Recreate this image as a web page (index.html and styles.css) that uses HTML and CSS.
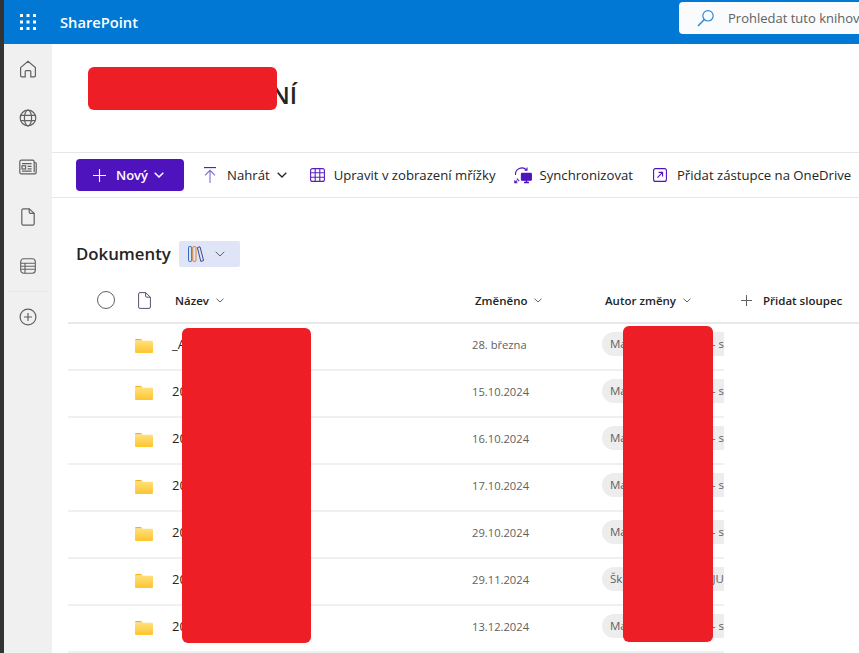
FILE: index.html
```html
<!DOCTYPE html>
<html lang="cs">

<head>
    <meta charset="UTF-8">
    <meta name="viewport" content="width=device-width, initial-scale=1.0">
    <title>SharePoint</title>
    <link rel="stylesheet" href="styles.css">
</head>

<body>
    <div class="app">
        <header class="topbar">
            <svg class="waffle" width="16" height="16" viewBox="0 0 16 16" fill="#fff">
                <rect x="0" y="0" width="3" height="3" /><rect x="6.5" y="0" width="3" height="3" /><rect x="13" y="0" width="3" height="3" />
                <rect x="0" y="6.5" width="3" height="3" /><rect x="6.5" y="6.5" width="3" height="3" /><rect x="13" y="6.5" width="3" height="3" />
                <rect x="0" y="13" width="3" height="3" /><rect x="6.5" y="13" width="3" height="3" /><rect x="13" y="13" width="3" height="3" />
            </svg>
            <div class="brand">SharePoint</div>
            <div class="search">
                <svg width="18" height="18" viewBox="0 0 18 18" fill="none" stroke="#2b88d8" stroke-width="1.2">
                    <circle cx="11" cy="6.8" r="5.2" />
                    <path d="M7.3 10.5 1 17" stroke-width="1.5" />
                </svg>
                <span>Prohledat tuto knihovnu</span>
            </div>
        </header>

        <div class="layout">
            <nav class="rail">
                <div class="rail-item">
                    <svg width="18" height="18" viewBox="0 0 18 18" fill="none" stroke="#616161" stroke-width="1.2">
                        <path d="M1.6 7.6 9 1.2l7.4 6.4v8.2a1 1 0 0 1-1 1h-3.6v-5.2a1 1 0 0 0-1-1H7.2a1 1 0 0 0-1 1v5.2H2.6a1 1 0 0 1-1-1z" />
                    </svg>
                </div>
                <div class="rail-item">
                    <svg width="18" height="18" viewBox="0 0 18 18" fill="none" stroke="#616161" stroke-width="1.2">
                        <circle cx="9" cy="9" r="7.8" />
                        <ellipse cx="9" cy="9" rx="3.6" ry="7.8" />
                        <path d="M1.8 6.3h14.4M1.8 11.7h14.4" />
                    </svg>
                </div>
                <div class="rail-item">
                    <svg width="18" height="16" viewBox="0 0 18 16" fill="none" stroke="#616161" stroke-width="1.2">
                        <path d="M15.2 3.5h1a1 1 0 0 1 1 1v8.7a1.6 1.6 0 0 1-1.6 1.6H2.4A1.6 1.6 0 0 1 .8 13.2V2.8a1.6 1.6 0 0 1 1.6-1.6h11.2a1.6 1.6 0 0 1 1.6 1.6v10.4" />
                        <rect x="3" y="6.8" width="3.6" height="3.2" />
                        <path d="M3 4.6h9.6M8.6 7.4h4M3 12.2h9.6M8.6 9.8h4" />
                    </svg>
                </div>
                <div class="rail-item">
                    <svg width="14" height="18" viewBox="0 0 14 18" fill="none" stroke="#616161" stroke-width="1.2">
                        <path d="M8.2.8H2.4A1.6 1.6 0 0 0 .8 2.4v13.2a1.6 1.6 0 0 0 1.6 1.6h9.2a1.6 1.6 0 0 0 1.6-1.6V5.4z" />
                        <path d="M8.2.8v3.4a1.2 1.2 0 0 0 1.2 1.2h3.8" />
                    </svg>
                </div>
                <div class="rail-item">
                    <svg width="16" height="16" viewBox="0 0 16 16" fill="none" stroke="#616161" stroke-width="1.1">
                        <rect x=".7" y=".7" width="14.6" height="14.6" rx="3" />
                        <path d="M.7 5.2h14.6M.7 8.2h14.6M.7 11.2h14.6M5 5.2v10.1" />
                    </svg>
                </div>
                <div class="rail-sep"></div>
                <div class="rail-item">
                    <svg width="18" height="18" viewBox="0 0 18 18" fill="none" stroke="#616161" stroke-width="1.2">
                        <circle cx="9" cy="9" r="7.9" />
                        <path d="M9 5v8M5 9h8" />
                    </svg>
                </div>
            </nav>

            <main class="content">
                <div class="site-head">
                    <h1 class="site-title">NÍ</h1>
                </div>

                <div class="commands">
                    <button class="new-btn">
                        <svg width="13" height="13" viewBox="0 0 13 13" stroke="#fff" stroke-width="1.1"><path d="M6.5 0v13M0 6.5h13" /></svg>
                        <span>Nový</span>
                        <svg width="10" height="6" viewBox="0 0 10 6" fill="none" stroke="#fff" stroke-width="1.5"><path d="M.7.8 5 5l4.3-4.2" /></svg>
                    </button>

                    <div class="cmd cmd-upload">
                        <svg width="12" height="16" viewBox="0 0 12 16" fill="none" stroke-width="1.1">
                            <path d="M0 .6h12" stroke="#4f13bd" />
                            <path d="M6 16V3.6M1 8.4l5-5 5 5" stroke="#7b6fd6" />
                        </svg>
                        <span>Nahrát</span>
                        <svg width="10" height="6" viewBox="0 0 10 6" fill="none" stroke="#242424" stroke-width="1.3"><path d="M.7.8 5 5l4.3-4.2" /></svg>
                    </div>
                    <div class="cmd cmd-grid">
                        <svg width="15" height="14" viewBox="0 0 15 14" fill="none" stroke="#5a1fc0" stroke-width="1.1">
                            <rect x=".6" y=".6" width="13.8" height="12.8" rx="2" />
                            <path d="M.6 4.8h13.8M.6 9.2h13.8M5.2.6v12.8M9.8.6v12.8" />
                        </svg>
                        <span>Upravit v zobrazení mřížky</span>
                    </div>
                    <div class="cmd cmd-sync">
                        <svg width="18" height="18" viewBox="0 0 18 18" fill="none" stroke="#4f13bd" stroke-width="1.1">
                            <path d="M1.5 9a6.5 6.5 0 0 1 11-5.2M10.6 4.2h2.4V1.6" />
                            <path d="M.8 16.6 3 14.8M.8 14.2v2.6h2.6M3 12.6q.8 1.6 2.2 2.4" />
                            <rect x="7.4" y="7.4" width="10" height="6.8" rx=".8" fill="#4f13bd" />
                            <path d="M10 16.6h5M12.4 14.2v2.4" stroke-width="1.5" />
                        </svg>
                        <span>Synchronizovat</span>
                    </div>
                    <div class="cmd cmd-shortcut">
                        <svg width="14" height="14" viewBox="0 0 14 14" fill="none" stroke="#4f13bd" stroke-width="1.1">
                            <rect x=".6" y=".6" width="12.8" height="12.8" rx="2" />
                            <path d="M4.4 9.6 9.4 4.6M5.6 4.4h4v4" />
                        </svg>
                        <span>Přidat zástupce na OneDrive</span>
                    </div>
                </div>

                <div class="library-head">
                    <h2 class="library-title">Dokumenty</h2>
                    <div class="view-btn">
                        <svg width="16" height="16" viewBox="0 0 16 16" fill="none" stroke-width="1">
                            <rect x=".5" y=".7" width="3.2" height="14.6" rx=".6" stroke="#2b6cc4" />
                            <rect x="4.8" y=".7" width="3.2" height="14.6" rx=".6" stroke="#d9822b" />
                            <path d="m9.4 1.6 2.6-.8 3.6 13.8-2.8.8z" stroke="#3a4a8c" />
                        </svg>
                        <svg width="10" height="6" viewBox="0 0 10 6" fill="none" stroke="#616161" stroke-width="1"><path d="M.7.8 5 5l4.3-4.2" /></svg>
                    </div>
                </div>

                <div class="list">
                    <div class="list-header">
                        <div class="head-select">
                            <span class="circle"></span>
                            <svg width="13" height="17" viewBox="0 0 13 17" fill="none" stroke="#5c4f6e" stroke-width="1">
                                <path d="M7.6.6H2A1.4 1.4 0 0 0 .6 2v13A1.4 1.4 0 0 0 2 16.4h9a1.4 1.4 0 0 0 1.4-1.4V5.2z" />
                                <path d="M7.6.6v3.4a1.2 1.2 0 0 0 1.2 1.2h3.6" />
                            </svg>
                        </div>
                        <div class="head-cell head-name">Název<svg class="sort" width="8" height="5" viewBox="0 0 8 5" fill="none" stroke="#616161"><path d="M.5.7 4 4l3.5-3.3" /></svg></div>
                        <div class="head-cell head-date">Změněno<svg class="sort" width="8" height="5" viewBox="0 0 8 5" fill="none" stroke="#616161"><path d="M.5.7 4 4l3.5-3.3" /></svg></div>
                        <div class="head-cell head-author">Autor změny<svg class="sort" width="8" height="5" viewBox="0 0 8 5" fill="none" stroke="#616161"><path d="M.5.7 4 4l3.5-3.3" /></svg></div>
                        <div class="head-cell head-add">
                            <svg width="11" height="11" viewBox="0 0 11 11" stroke="#616161"><path d="M5.5 0v11M0 5.5h11" /></svg>
                            Přidat sloupec
                        </div>
                    </div>

                    <div class="row">
                        <svg class="folder" width="18" height="14" viewBox="0 0 18 14"><use href="#folder-icon" /></svg>
                        <div class="name">_A</div>
                        <div class="date">28. března</div>
                        <div class="pill"><span>Ma</span><span>- s</span></div>
                    </div>
                    <div class="row">
                        <svg class="folder" width="18" height="14" viewBox="0 0 18 14"><use href="#folder-icon" /></svg>
                        <div class="name">20</div>
                        <div class="date">15.10.2024</div>
                        <div class="pill"><span>Ma</span><span>- s</span></div>
                    </div>
                    <div class="row">
                        <svg class="folder" width="18" height="14" viewBox="0 0 18 14"><use href="#folder-icon" /></svg>
                        <div class="name">20</div>
                        <div class="date">16.10.2024</div>
                        <div class="pill"><span>Ma</span><span>- s</span></div>
                    </div>
                    <div class="row">
                        <svg class="folder" width="18" height="14" viewBox="0 0 18 14"><use href="#folder-icon" /></svg>
                        <div class="name">20</div>
                        <div class="date">17.10.2024</div>
                        <div class="pill"><span>Ma</span><span>- s</span></div>
                    </div>
                    <div class="row">
                        <svg class="folder" width="18" height="14" viewBox="0 0 18 14"><use href="#folder-icon" /></svg>
                        <div class="name">20</div>
                        <div class="date">29.10.2024</div>
                        <div class="pill"><span>Ma</span><span>- s</span></div>
                    </div>
                    <div class="row">
                        <svg class="folder" width="18" height="14" viewBox="0 0 18 14"><use href="#folder-icon" /></svg>
                        <div class="name">20</div>
                        <div class="date">29.11.2024</div>
                        <div class="pill"><span>Šk</span><span>JU</span></div>
                    </div>
                    <div class="row">
                        <svg class="folder" width="18" height="14" viewBox="0 0 18 14"><use href="#folder-icon" /></svg>
                        <div class="name">20</div>
                        <div class="date">13.12.2024</div>
                        <div class="pill"><span>Ma</span><span>- s</span></div>
                    </div>
                </div>
            </main>
        </div>
    </div>

    <!-- red marks painted over the screenshot -->
    <div class="redact redact-title"></div>
    <div class="redact redact-names"></div>
    <div class="redact redact-authors"></div>

    <svg width="0" height="0" class="defs">
        <defs>
            <linearGradient id="folder-fill" x1="0" y1="0" x2="0" y2="1">
                <stop offset="0" stop-color="#ffe07a" />
                <stop offset="1" stop-color="#fdc52f" />
            </linearGradient>
            <symbol id="folder-icon" viewBox="0 0 18 14">
                <path d="M0 1.2A1.2 1.2 0 0 1 1.2 0h4.6l2 1.6H0z" fill="#f2b21b" />
                <rect x="0" y="1.8" width="18" height="12.2" rx="1" fill="url(#folder-fill)" />
            </symbol>
        </defs>
    </svg>
</body>

</html>
```

FILE: styles.css
```css
* {
    box-sizing: border-box;
}

html,
body {
    height: 100%;
}

body {
    margin: 0;
    overflow: hidden;
    background-color: #fff;
    border-left: 4px solid #333;
    font-family: "Open Sans", "Noto Sans", sans-serif;
    font-size: 13.15px;
    color: #242424;
}

.app {
    display: flex;
    flex-direction: column;
    height: 100%;
}

.defs {
    position: absolute;
}

/* top bar */
.topbar {
    display: flex;
    align-items: center;
    flex: 0 0 44px;
    padding-left: 16px;
    background-color: #0078d4;
}

.waffle {
    flex: none;
}

.brand {
    margin-left: 24px;
    color: #fff;
    font-size: 14.7px;
    font-weight: 600;
}

.search {
    display: flex;
    align-items: center;
    gap: 13px;
    width: 180px;
    height: 32px;
    margin: -8px 0 0 auto;
    padding-left: 18px;
    overflow: hidden;
    background-color: #f9fbfd;
    border-radius: 4px 0 0 4px;
    color: #616161;
    font-size: 13px;
    white-space: nowrap;
}

.search svg {
    flex: none;
}

/* left rail */
.layout {
    display: flex;
    flex: 1;
    min-height: 0;
}

.rail {
    display: flex;
    flex-direction: column;
    align-items: center;
    flex: 0 0 48px;
    background-color: #f0f0f0;
}

.rail-item {
    display: flex;
    justify-content: center;
    align-items: center;
    flex: none;
    width: 48px;
    height: 49.4px;
}

.rail-sep {
    width: 40px;
    height: 1px;
    background-color: #e6e6e6;
}

/* page */
.content {
    flex: 1;
    min-width: 0;
}

.site-head {
    display: flex;
    align-items: center;
    height: 108px;
    padding: 0 0 6px 36px;
}

.site-title {
    width: 209px;
    margin: 0;
    font-size: 24px;
    font-weight: 600;
    line-height: 32px;
    text-align: right;
}

.commands {
    display: flex;
    align-items: center;
    height: 46px;
    padding-left: 24px;
    border-top: 1px solid #e6e6e6;
    border-bottom: 1px solid #e6e6e6;
    white-space: nowrap;
}

.new-btn {
    display: flex;
    align-items: center;
    width: 108px;
    height: 32px;
    padding: 0 0 0 17px;
    border: 0;
    border-radius: 4px;
    background-color: #4f13bd;
    color: #fff;
    font: 600 13px "Open Sans", "Noto Sans", sans-serif;
}

.new-btn span {
    margin: 0 6px 0 10px;
}

.cmd {
    display: flex;
    align-items: center;
}

.cmd-upload {
    margin-left: 20px;
    gap: 11px;
}

.cmd-upload span {
    margin-right: -4px;
}

.cmd-grid {
    margin-left: 23px;
    gap: 9px;
}

.cmd-sync {
    margin-left: 19px;
    gap: 7px;
}

.cmd-shortcut {
    margin-left: 20px;
    gap: 10px;
}

.library-head {
    display: flex;
    align-items: center;
    height: 26px;
    margin: 43px 0 0 24px;
}

.library-title {
    margin: 0;
    padding-bottom: 2px;
    font-size: 16.8px;
    font-weight: 600;
}

.view-btn {
    display: flex;
    align-items: center;
    gap: 11px;
    width: 61px;
    height: 26px;
    margin-left: 8px;
    padding-left: 9px;
    border-radius: 2px;
    background-color: #e0e4f7;
}

/* file list */
.list {
    margin: 13px 0 0 16px;
}

.list-header {
    display: grid;
    grid-template-columns: 107px 300px 130px 136px auto;
    align-items: center;
    height: 44px;
    padding-bottom: 2px;
    border-bottom: 2px solid #e8e8e8;
    font-size: 11.5px;
    font-weight: 600;
}

.head-select {
    display: flex;
    align-items: center;
    gap: 23px;
    padding-left: 29px;
}

.circle {
    width: 18px;
    height: 18px;
    border: 1px solid #616161;
    border-radius: 50%;
}

.head-cell {
    display: flex;
    align-items: center;
    white-space: nowrap;
}

.sort {
    margin-left: 7px;
}

.head-add svg {
    margin-right: 11px;
}

.row {
    display: grid;
    grid-template-columns: 104px 300px 130px 122px;
    align-items: center;
    width: 656px;
    height: 47px;
    padding-bottom: 5px;
    border-bottom: 2px solid #f0f0f0;
}

.folder {
    margin: 3px 0 0 67px;
}

.name {
    font-size: 13px;
}

.date {
    color: #616161;
    font-size: 11.2px;
}

.pill {
    display: flex;
    justify-content: space-between;
    height: 24px;
    padding-left: 8px;
    overflow: hidden;
    background-color: #ededed;
    border-radius: 12px 0 0 12px;
    color: #616161;
    font-size: 11.5px;
    line-height: 24px;
    white-space: nowrap;
}

/* red marks over the screenshot */
.redact {
    position: absolute;
    background-color: #ee1e27;
    border-radius: 6px;
}

.redact-title {
    left: 88px;
    top: 67px;
    width: 189px;
    height: 43px;
}

.redact-names {
    left: 182px;
    top: 328px;
    width: 129px;
    height: 315px;
}

.redact-authors {
    left: 623px;
    top: 326px;
    width: 90px;
    height: 316px;
}
```
